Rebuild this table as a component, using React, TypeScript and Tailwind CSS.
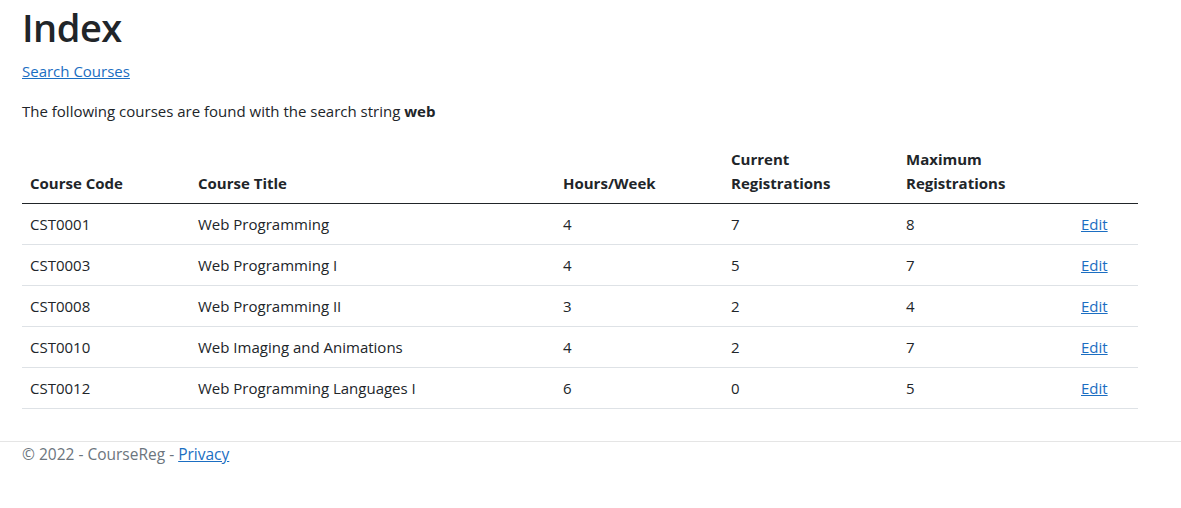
import React from 'react';

interface Course {
  code: string;
  title: string;
  hours: number;
  current: number;
  max: number;
}

const courses: Course[] = [
  { code: 'CST0001', title: 'Web Programming', hours: 4, current: 7, max: 8 },
  { code: 'CST0003', title: 'Web Programming I', hours: 4, current: 5, max: 7 },
  { code: 'CST0008', title: 'Web Programming II', hours: 3, current: 2, max: 4 },
  { code: 'CST0010', title: 'Web Imaging and Animations', hours: 4, current: 2, max: 7 },
  { code: 'CST0012', title: 'Web Programming Languages I', hours: 6, current: 0, max: 5 },
];

export default function App() {
  return (
    <div
      className="min-h-[508px] bg-white text-[#212529] text-[15px] leading-6"
      style={{ fontFamily: '"Open Sans", "Noto Sans", sans-serif' }}
    >
      <main className="pl-[22px] pt-[3px] w-[1138px]">
        <h1 className="text-[38px] leading-[48px] font-semibold mb-2 tracking-[-0.5px]">Index</h1>
        <p className="mb-4">
          <a href="#" className="text-[#1b6ec2] underline">Search Courses</a>
        </p>
        <p className="mb-4">
          The following courses are found with the search string <b className="font-bold">web</b>
        </p>
        <table className="w-[1116px] border-collapse mb-4 table-fixed">
          <colgroup>
            <col className="w-[168px]" />
            <col className="w-[365px]" />
            <col className="w-[168px]" />
            <col className="w-[175px]" />
            <col className="w-[175px]" />
            <col className="w-[65px]" />
          </colgroup>
          <thead>
            <tr className="border-b border-[#212529]">
              <th className="p-2 text-left align-bottom font-bold">Course Code</th>
              <th className="p-2 text-left align-bottom font-bold">Course Title</th>
              <th className="p-2 text-left align-bottom font-bold">Hours/Week</th>
              <th className="p-2 text-left align-bottom font-bold">Current Registrations</th>
              <th className="p-2 text-left align-bottom font-bold">Maximum Registrations</th>
              <th className="p-2"></th>
            </tr>
          </thead>
          <tbody>
            {courses.map((c) => (
              <tr key={c.code} className="border-b border-[#dee2e6]">
                <td className="p-2">{c.code}</td>
                <td className="p-2">{c.title}</td>
                <td className="p-2">{c.hours}</td>
                <td className="p-2">{c.current}</td>
                <td className="p-2">{c.max}</td>
                <td className="p-2">
                  <a href="#" className="text-[#1b6ec2] underline">Edit</a>
                </td>
              </tr>
            ))}
          </tbody>
        </table>
      </main>
      <footer className="mt-[32px] border-t border-[#e5e5e5] pl-[22px] text-[15.5px] text-[#6c757d]">
        © 2022 - CourseReg - <a href="#" className="text-[#1b6ec2] underline">Privacy</a>
      </footer>
    </div>
  );
}
